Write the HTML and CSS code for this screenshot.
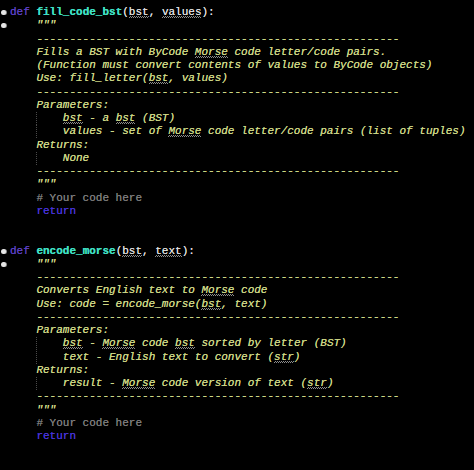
FILE: index.html
```html
<!DOCTYPE html>
<html>
<head>
<meta charset="utf-8">
<link rel="stylesheet" href="styles.css">
</head>
<body>
<div class="editor">
  <div class="ln"><span class="g"><span class="fold"></span></span><span class="kw">def</span> <span class="fn">fill_code_bst</span><span class="p">(<span class="sp">bst</span>, <span class="sp">values</span>):</span></div>
  <div class="ln"><span class="g"><span class="fold"></span></span>    <span class="ds">"""</span></div>
  <div class="ln"><span class="g"></span>    <span class="ds">-------------------------------------------------------</span></div>
  <div class="ln"><span class="g"></span>    <span class="ds">Fills a BST with ByCode <span class="sp">Morse</span> code letter/code pairs.</span></div>
  <div class="ln"><span class="g"></span>    <span class="ds">(Function must convert contents of values to ByCode objects)</span></div>
  <div class="ln"><span class="g"></span>    <span class="ds">Use: fill_letter(<span class="sp">bst</span>, values)</span></div>
  <div class="ln"><span class="g"></span>    <span class="ds">-------------------------------------------------------</span></div>
  <div class="ln"><span class="g"></span>    <span class="ds">Parameters:</span></div>
  <div class="ln"><span class="g"></span>    <span class="gd">    </span><span class="ds"><span class="sp">bst</span> - a <span class="sp">bst</span> (BST)</span></div>
  <div class="ln"><span class="g"></span>    <span class="gd">    </span><span class="ds">values - set of <span class="sp">Morse</span> code letter/code pairs (list of tuples)</span></div>
  <div class="ln"><span class="g"></span>    <span class="ds">Returns:</span></div>
  <div class="ln"><span class="g"></span>    <span class="gd">    </span><span class="ds">None</span></div>
  <div class="ln"><span class="g"></span>    <span class="ds">-------------------------------------------------------</span></div>
  <div class="ln"><span class="g"></span>    <span class="ds">"""</span></div>
  <div class="ln"><span class="g"></span>    <span class="cm"># Your code here</span></div>
  <div class="ln"><span class="g"></span>    <span class="rt">return</span></div>
  <div class="ln"><span class="g"></span> </div>
  <div class="ln"><span class="g"></span> </div>
  <div class="ln"><span class="g"><span class="fold"></span></span><span class="kw">def</span> <span class="fn">encode_morse</span><span class="p">(<span class="sp">bst</span>, <span class="sp">text</span>):</span></div>
  <div class="ln"><span class="g"><span class="fold"></span></span>    <span class="ds">"""</span></div>
  <div class="ln"><span class="g"></span>    <span class="ds">-------------------------------------------------------</span></div>
  <div class="ln"><span class="g"></span>    <span class="ds">Converts English text to <span class="sp">Morse</span> code</span></div>
  <div class="ln"><span class="g"></span>    <span class="ds">Use: code = encode_morse(<span class="sp">bst</span>, text)</span></div>
  <div class="ln"><span class="g"></span>    <span class="ds">-------------------------------------------------------</span></div>
  <div class="ln"><span class="g"></span>    <span class="ds">Parameters:</span></div>
  <div class="ln"><span class="g"></span>    <span class="gd">    </span><span class="ds"><span class="sp">bst</span> - <span class="sp">Morse</span> code <span class="sp">bst</span> sorted by letter (BST)</span></div>
  <div class="ln"><span class="g"></span>    <span class="gd">    </span><span class="ds">text - English text to convert (<span class="sp">str</span>)</span></div>
  <div class="ln"><span class="g"></span>    <span class="ds">Returns:</span></div>
  <div class="ln"><span class="g"></span>    <span class="gd">    </span><span class="ds">result - <span class="sp">Morse</span> code version of text (<span class="sp">str</span>)</span></div>
  <div class="ln"><span class="g"></span>    <span class="ds">-------------------------------------------------------</span></div>
  <div class="ln"><span class="g"></span>    <span class="ds">"""</span></div>
  <div class="ln"><span class="g"></span>    <span class="cm"># Your code here</span></div>
  <div class="ln"><span class="g"></span>    <span class="rt">return</span></div>
</div>
</body>
</html>
```
FILE: styles.css
```css
html, body {
  margin: 0;
  padding: 0;
  background: #000;
  height: 100%;
}
.editor {
  padding-top: 6px;
  font-family: "Liberation Mono", "DejaVu Sans Mono", monospace;
  font-size: 11px;
  line-height: 13.25px;
  color: #d8d8d8;
  text-shadow: 0 0 0.6px currentColor;
}
.ln {
  display: block;
  white-space: pre;
  height: 13.25px;
}
.g {
  display: inline-block;
  vertical-align: top;
  width: 10px;
  height: 13.25px;
  position: relative;
}
.fold {
  position: absolute;
  left: 1px;
  top: 4px;
  width: 5px;
  height: 5px;
  border-radius: 50%;
  background: #e6e6e6;
  box-shadow: 1px 0 0 #8a8a8a;
}
.kw {
  color: #5b3fc4;
}
.fn {
  color: #3fe0c4;
  font-weight: bold;
}
.p {
  color: #dcdcdc;
}
.ds {
  color: #ccd684;
  font-style: italic;
}
.cm {
  color: #7a7a7a;
}
.rt {
  color: #4632d8;
}
.sp {
  background-image:
    repeating-linear-gradient(90deg, #8c8c8c 0 1px, transparent 1px 2px),
    repeating-linear-gradient(90deg, transparent 0 1px, #8c8c8c 1px 2px);
  background-repeat: no-repeat;
  background-size: 100% 1px, 100% 1px;
  background-position: left bottom 0, left bottom 1px;
}
.gd {
  display: inline-block;
  vertical-align: top;
  height: 13.25px;
  background: repeating-linear-gradient(to bottom, #4a4a4a 0 1px, transparent 1px 2px) no-repeat left top / 1px 100%;
}
```
